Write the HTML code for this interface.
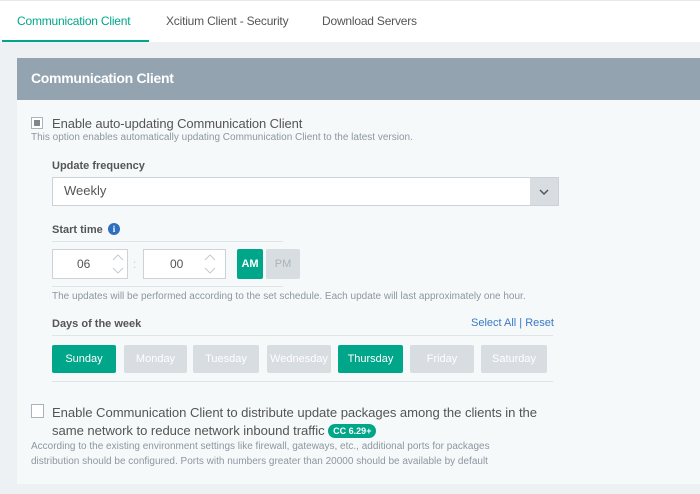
<!DOCTYPE html>
<html><head><style>
*{box-sizing:border-box;margin:0;padding:0}
body{width:700px;height:494px;background:#edf1f4;font-family:"Liberation Sans",sans-serif;position:relative;overflow:hidden;color:#555}
.a{position:absolute;white-space:nowrap}
.tabs{position:absolute;left:0;top:0;width:700px;height:42px;background:#fff;border-top:1px solid #e6e9ec}
.tab{position:absolute;top:13px;font-size:12px;color:#555;letter-spacing:-0.2px}
.panel{position:absolute;left:17px;top:58px;width:683px;height:426px;background:#f6f9fa}
.hdr{position:absolute;left:0;top:0;width:683px;height:42px;background:#93a3b0;color:#fff;font-weight:bold;font-size:14px;padding:12px 14px;letter-spacing:-0.3px}
.lbl{font-size:11px;font-weight:bold;color:#555}
.box{position:absolute;background:#fff;border:1px solid #ccd2d7}
.btn{position:absolute;top:345px;height:28px;border-radius:2px;color:#fff;font-size:11px;text-align:center;line-height:28px;background:#d8dde2}
.g{background:#00a68a}
.line{position:absolute;height:1px;background:#dfe4e8}
.sub{font-size:10px;color:#8c97a1}
</style></head><body>
<div class="tabs">
<div class="tab" style="left:17px;color:#00a68a">Communication Client</div>
<div class="tab" style="left:166px">Xcitium Client - Security</div>
<div class="tab" style="left:322px">Download Servers</div>
<div style="position:absolute;left:2px;top:39px;width:147px;height:2px;background:#00a68a"></div>
</div>
<div class="panel"><div class="hdr">Communication Client</div></div>

<div class="a" style="left:31px;top:117px;width:12px;height:12px;border:1px solid #aab3bb;background:#fff"><div style="margin:2px;width:6px;height:6px;background:#7d8790"></div></div>
<div class="a" style="left:52px;top:116px;font-size:13px;letter-spacing:-0.1px;color:#555">Enable auto-updating Communication Client</div>
<div class="a sub" style="left:31px;top:132px">This option enables automatically updating Communication Client to the latest version.</div>

<div class="a lbl" style="left:52px;top:160px">Update frequency</div>
<div class="box" style="left:52px;top:177px;width:507px;height:29px"></div>
<div class="a" style="left:64px;top:183px;font-size:13px;color:#555">Weekly</div>
<div class="a" style="left:530px;top:178px;width:28px;height:27px;background:#d8dde2"><svg width="28" height="27"><path d="M10 12l4 4 4-4" fill="none" stroke="#555" stroke-width="1.5"/></svg></div>

<div class="a lbl" style="left:52px;top:224px">Start time</div>
<div class="a" style="left:108px;top:223px;width:12px;height:12px;border-radius:50%;background:#2f6fc0;color:#fff;font-size:9px;font-weight:bold;text-align:center;line-height:12px;font-family:'Liberation Serif',serif">i</div>
<div class="line" style="left:52px;top:241px;width:231px"></div>
<div class="box" style="left:52px;top:249px;width:76px;height:30px"></div>
<div class="a" style="left:77px;top:257px;font-size:12px">06</div>
<svg class="a" style="left:110px;top:251px" width="16" height="26"><path d="M3 9l5-5 5 5M3 17l5 5 5-5" fill="none" stroke="#c5cbd0" stroke-width="1"/></svg>
<div class="a" style="left:133px;top:257px;font-size:12px;color:#ccc">:</div>
<div class="box" style="left:143px;top:249px;width:83px;height:30px"></div>
<div class="a" style="left:170px;top:257px;font-size:12px">00</div>
<svg class="a" style="left:202px;top:251px" width="16" height="26"><path d="M3 9l5-5 5 5M3 17l5 5 5-5" fill="none" stroke="#c5cbd0" stroke-width="1"/></svg>
<div class="a g" style="left:237px;top:249px;width:26px;height:30px;border-radius:2px;color:#fff;font-size:11px;text-align:center;line-height:30px;font-weight:bold">AM</div>
<div class="a" style="left:266px;top:249px;width:34px;height:30px;border-radius:2px;background:#d8dde2;color:#aab3bb;font-size:11px;text-align:center;line-height:30px">PM</div>
<div class="line" style="left:52px;top:286px;width:231px"></div>
<div class="a sub" style="left:52px;top:291px">The updates will be performed according to the set schedule. Each update will last approximately one hour.</div>

<div class="a lbl" style="left:52px;top:318px">Days of the week</div>
<div class="a" style="left:471px;top:317px;font-size:11px;color:#3a78c4">Select All | Reset</div>
<div class="line" style="left:52px;top:335px;width:501px"></div>
<div class="btn g" style="left:52px;width:64px">Sunday</div>
<div class="btn" style="left:124px;width:63px">Monday</div>
<div class="btn" style="left:193px;width:66px">Tuesday</div>
<div class="btn" style="left:267px;width:64px">Wednesday</div>
<div class="btn g" style="left:338px;width:65px">Thursday</div>
<div class="btn" style="left:410px;width:64px">Friday</div>
<div class="btn" style="left:481px;width:66px">Saturday</div>
<div class="line" style="left:52px;top:381px;width:501px"></div>

<div class="a" style="left:31px;top:404px;width:13px;height:14px;border:1px solid #aab3bb;background:#fff"></div>
<div class="a" style="left:52px;top:404px;font-size:13.1px;letter-spacing:-0.05px;line-height:18px;color:#555">Enable Communication Client to distribute update packages among the clients in the<br>same network to reduce network inbound traffic <span style="display:inline-block;vertical-align:1px;padding:0 5px;height:14px;border-radius:7px;background:#00a68a;color:#fff;font-size:9px;font-weight:bold;line-height:14px;letter-spacing:0">CC 6.29+</span></div>
<div class="a sub" style="left:31px;top:439px;line-height:15px">According to the existing environment settings like firewall, gateways, etc., additional ports for packages<br>distribution should be configured. Ports with numbers greater than 20000 should be available by default</div>
</body></html>
